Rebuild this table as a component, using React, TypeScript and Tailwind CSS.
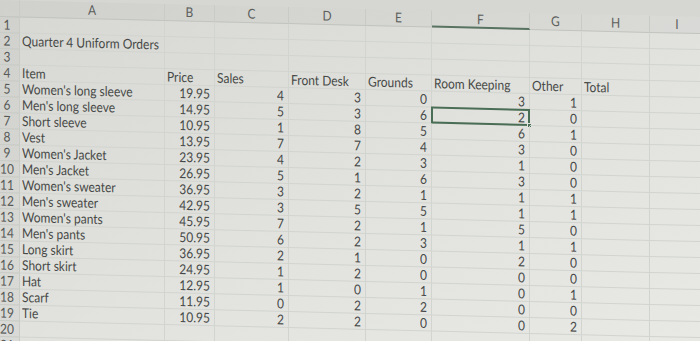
import React from "react";

type Row = [string, string, number, number, number, number, number];

const items: Row[] = [
  ["Women's long sleeve", "19.95", 4, 3, 0, 3, 1],
  ["Men's long sleeve", "14.95", 5, 3, 6, 2, 0],
  ["Short sleeve", "10.95", 1, 8, 5, 6, 1],
  ["Vest", "13.95", 7, 7, 4, 3, 0],
  ["Women's Jacket", "23.95", 4, 2, 3, 1, 0],
  ["Men's Jacket", "26.95", 5, 1, 6, 3, 0],
  ["Women's sweater", "36.95", 3, 2, 1, 1, 1],
  ["Men's sweater", "42.95", 3, 5, 5, 1, 1],
  ["Women's pants", "45.95", 7, 2, 1, 5, 0],
  ["Men's pants", "50.95", 6, 2, 3, 1, 1],
  ["Long skirt", "36.95", 2, 1, 0, 2, 0],
  ["Short skirt", "24.95", 1, 2, 0, 0, 0],
  ["Hat", "12.95", 1, 0, 1, 0, 1],
  ["Scarf", "11.95", 0, 2, 2, 0, 0],
  ["Tie", "10.95", 2, 2, 0, 0, 2],
];

const letters = ["", "A", "B", "C", "D", "E", "F", "G", "H", "I", "J"];

type CellVal = { text: string; right?: boolean };

function buildRow(r: number): CellVal[] {
  const empty = (): CellVal => ({ text: "" });
  const row: CellVal[] = Array.from({ length: 10 }, empty);
  if (r === 2) row[0] = { text: "Quarter 4 Uniform Orders" };
  if (r === 4) {
    ["Item", "Price", "Sales", "Front Desk", "Grounds", "Room Keeping", "Other", "Total"].forEach(
      (t, i) => (row[i] = { text: t })
    );
  }
  if (r >= 5 && r <= 19) {
    const it = items[r - 5];
    row[0] = { text: it[0] };
    row[1] = { text: it[1], right: true };
    for (let k = 2; k <= 6; k++) row[k] = { text: String(it[k]), right: true };
  }
  return row;
}

const txt = "inline-block scale-y-[1.13]";

export default function App() {
  const rows = Array.from({ length: 22 }, (_, i) => i + 1);
  return (
    <div className="w-[700px] h-[341px] overflow-hidden bg-[#d6d7d2]">
      <div className="origin-left skew-y-[1.4deg] w-[795px] grid grid-cols-[20px_145px_50px_74px_77px_66px_98px_52px_68px_55px_90px] bg-linear-to-br from-[#d7d8d3] via-[#e2e3df] to-[#eaeae7] text-[12px] leading-[14px] text-[#474947] [font-family:Lato,'Open_Sans',sans-serif]">
        {letters.map((l, i) => (
          <div
            key={"h" + i}
            className={
              "h-[17px] flex items-center justify-center bg-black/[0.03] border-r border-[#c9cbc6] text-[#5d5f5d] " +
              (l === "F" ? "border-b-2 border-b-[#58735f]" : "border-b border-b-[#c2c4bf]")
            }
          >
            <span className={txt}>{l}</span>
          </div>
        ))}
        {rows.map((r) => {
          const vals = buildRow(r);
          return (
            <React.Fragment key={r}>
              <div className="h-4 flex items-center bg-black/[0.03] border-r border-b border-[#c9cbc6] text-[#575957]">
                <span className={"w-[14px] text-center " + txt}>{r}</span>
              </div>
              {vals.map((v, c) => {
                const selected = r === 6 && c === 5;
                return (
                  <div
                    key={c}
                    className={
                      "relative h-4 flex items-center whitespace-nowrap border-r border-b border-[#d2d4cf] " +
                      (v.right ? "justify-end pr-1" : "justify-start pl-0.5")
                    }
                  >
                    <span className={txt}>{v.text}</span>
                    {selected && (
                      <>
                        <div className="absolute -left-px -top-px -right-px -bottom-px border-2 border-[#4a6e55]" />
                        <div className="absolute -right-[3px] -bottom-[3px] w-[5px] h-[5px] bg-[#4a6e55] border border-[#e3e4e0]" />
                      </>
                    )}
                  </div>
                );
              })}
            </React.Fragment>
          );
        })}
      </div>
    </div>
  );
}
